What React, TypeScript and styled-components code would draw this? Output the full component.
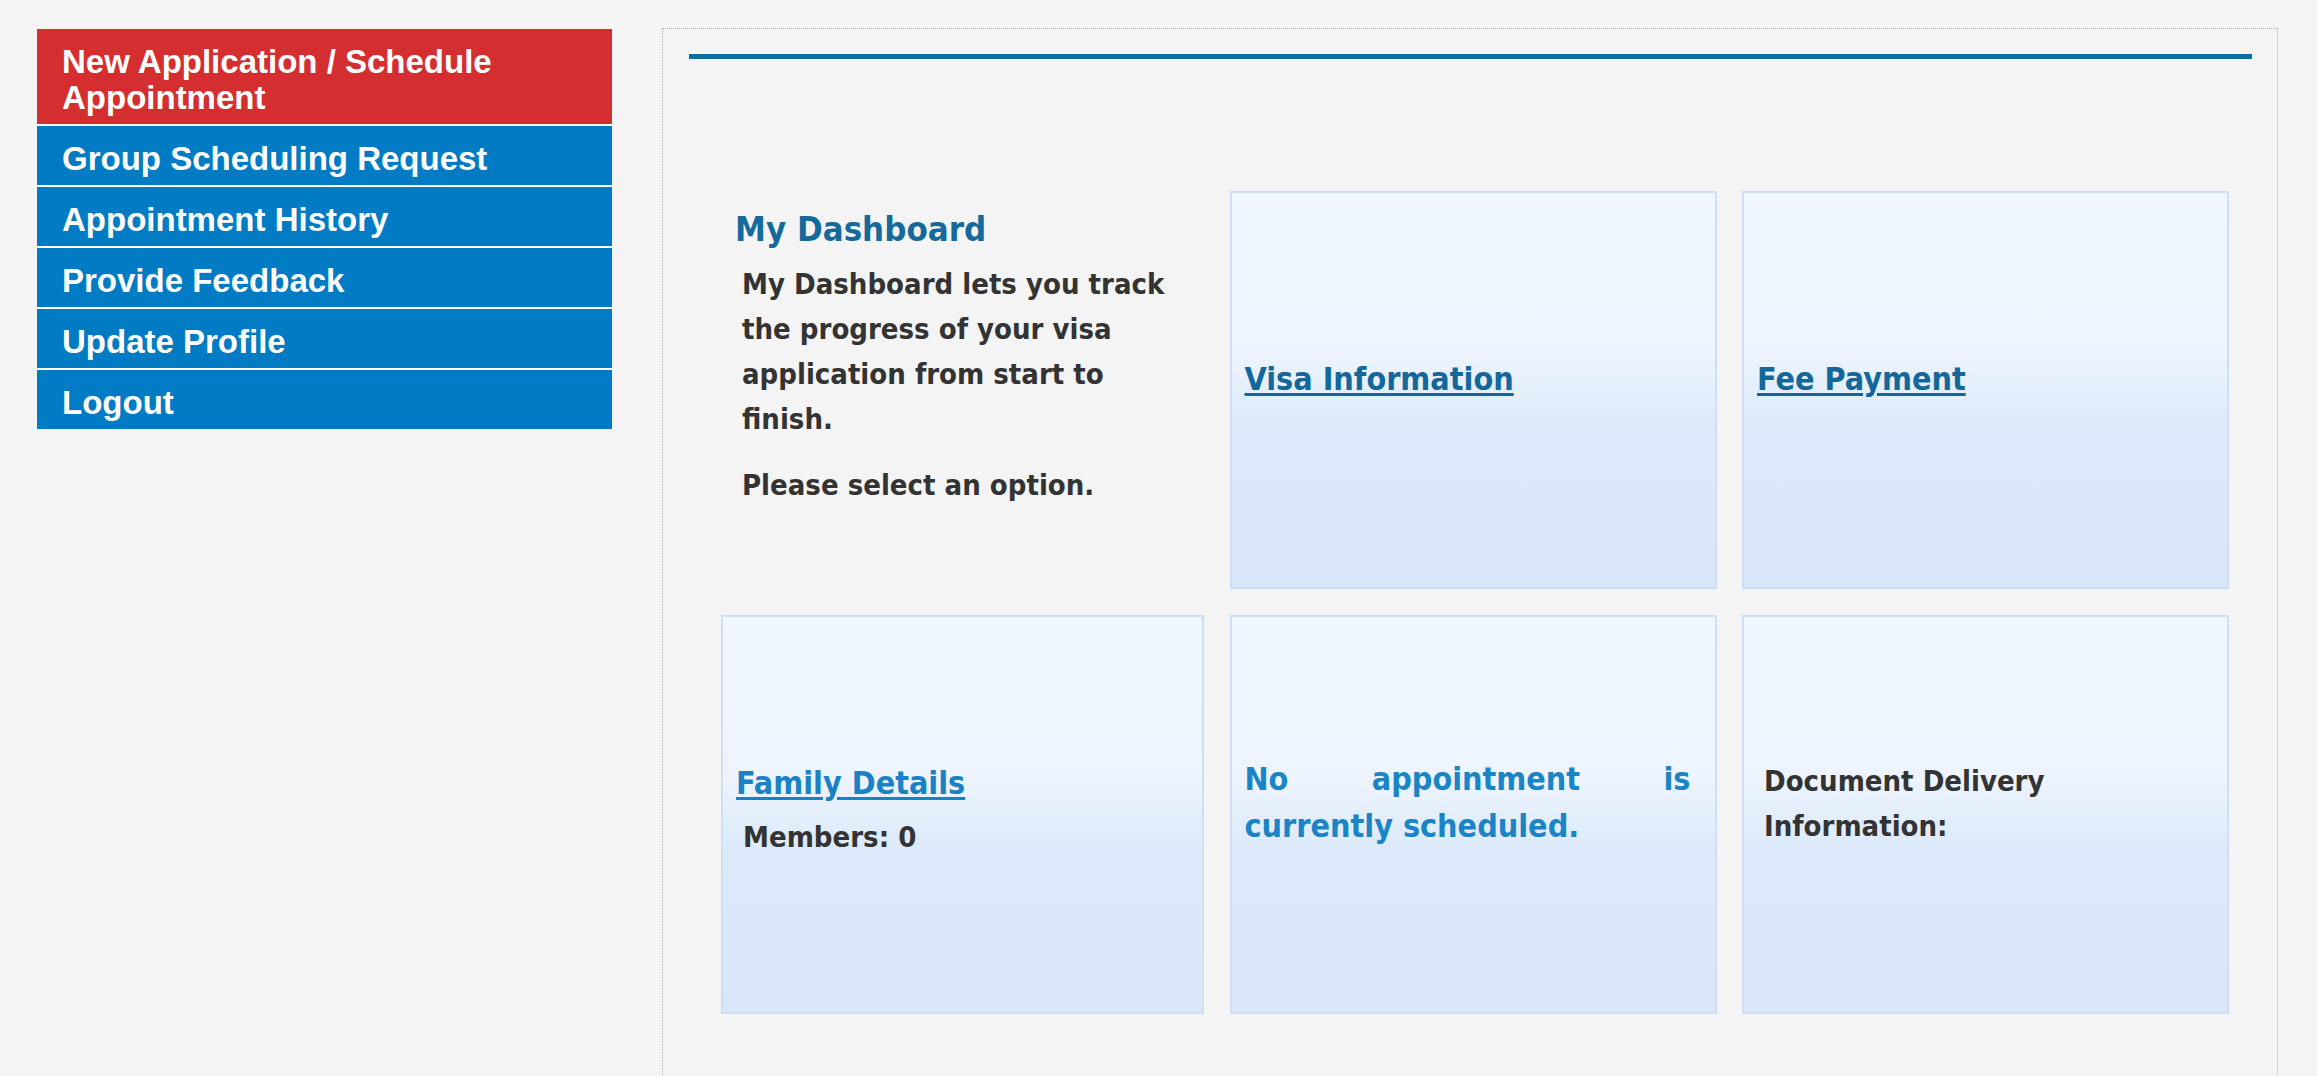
import styled, { createGlobalStyle } from "styled-components";

const GlobalStyle = createGlobalStyle`
  html, body {
    margin: 0;
    background: #f4f4f4;
  }
  body {
    font-family: "DejaVu Sans Condensed", "DejaVu Sans", sans-serif;
    font-stretch: condensed;
  }
`;

const Page = styled.div`
  display: flex;
  align-items: flex-start;
  gap: 50px;
  padding: 28px 0 0 37px;
  min-height: 100vh;
  box-sizing: border-box;
`;

const Sidebar = styled.nav`
  width: 575px;
  margin-top: 1px;
  display: flex;
  flex-direction: column;
  font-family: "Liberation Sans", Arial, sans-serif;
  font-stretch: normal;
`;

const NavItem = styled.a<{ $active?: boolean }>`
  display: block;
  background: ${(p) => (p.$active ? "#d52e31" : "#007bc4")};
  color: #fff;
  font-weight: bold;
  font-size: 33px;
  line-height: 36px;
  padding: 15px 25px 8px;
  text-decoration: none;
  cursor: pointer;

  & + & {
    border-top: 2px solid #fff;
  }
`;

const Panel = styled.main`
  width: 1616px;
  align-self: stretch;
  box-sizing: border-box;
  border: 1px dotted #b3b3b3;
  border-bottom: none;
  padding: 25px 25px 0 26px;
`;

const Rule = styled.div`
  height: 5px;
  background: #136b9b;
`;

const Grid = styled.div`
  display: grid;
  grid-template-columns: 483px 487px 487px;
  grid-template-rows: 398px 399px;
  column-gap: 25.5px;
  row-gap: 26px;
  margin: 132px 0 0 32px;
`;

const Intro = styled.section`
  padding: 18px 0 0 14px;
`;

const Title = styled.h2`
  margin: 0;
  font-size: 34.5px;
  line-height: 41px;
  font-weight: bold;
  color: #15699b;
`;

const Text = styled.p<{ $gap?: number }>`
  margin: ${(p) => p.$gap ?? 0}px 0 0;
  padding: 0 10px 0 7px;
  font-size: 29px;
  line-height: 45px;
  font-weight: bold;
  color: #333;
`;

const Card = styled.div<{ $lift?: number }>`
  display: flex;
  flex-direction: column;
  justify-content: center;
  box-sizing: border-box;
  padding: 0 14px ${(p) => p.$lift ?? 22}px 13px;
  border: 2px solid #cddff3;
  background: linear-gradient(
    180deg,
    #eff6fd 0%,
    #edf4fd 40%,
    #dbe9fa 60%,
    #d9e7f9 100%
  );
`;

const CardLink = styled.a<{ $bright?: boolean }>`
  align-self: flex-start;
  font-size: 32px;
  line-height: 45px;
  font-weight: bold;
  color: ${(p) => (p.$bright ? "#1a82c4" : "#13679b")};
  text-decoration: underline;
  text-decoration-thickness: 3px;
  text-underline-offset: 3px;
  cursor: pointer;
`;

const Notice = styled.p`
  margin: 0;
  padding-right: 10px;
  font-size: 32px;
  line-height: 47px;
  font-weight: bold;
  text-align: justify;
  color: #1984c6;
`;

const App = () => (
  <>
    <GlobalStyle />
    <Page>
      <Sidebar>
        <NavItem $active>New Application / Schedule Appointment</NavItem>
        <NavItem>Group Scheduling Request</NavItem>
        <NavItem>Appointment History</NavItem>
        <NavItem>Provide Feedback</NavItem>
        <NavItem>Update Profile</NavItem>
        <NavItem>Logout</NavItem>
      </Sidebar>
      <Panel>
        <Rule />
        <Grid>
          <Intro>
            <Title>My Dashboard</Title>
            <Text $gap={12}>
              My Dashboard lets you track the progress of your visa
              application from start to finish.
            </Text>
            <Text $gap={21}>Please select an option.</Text>
          </Intro>
          <Card>
            <CardLink>Visa Information</CardLink>
          </Card>
          <Card>
            <CardLink>Fee Payment</CardLink>
          </Card>
          <Card $lift={9}>
            <CardLink $bright>Family Details</CardLink>
            <Text $gap={9}>Members: 0</Text>
          </Card>
          <Card $lift={24}>
            <Notice>No appointment is currently scheduled.</Notice>
          </Card>
          <Card>
            <Text>Document Delivery Information:</Text>
          </Card>
        </Grid>
      </Panel>
    </Page>
  </>
);

export default App;
